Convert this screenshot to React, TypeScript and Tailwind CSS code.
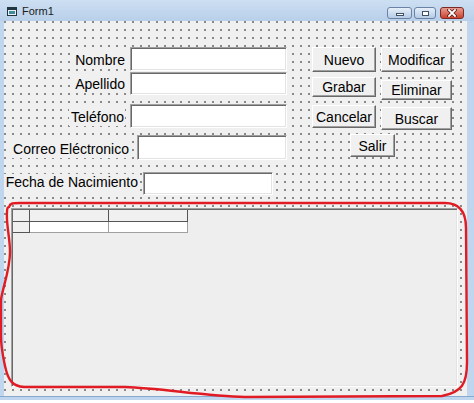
import type { ReactNode } from "react";

const TextBox = ({ className }: { className: string }) => (
  <div
    className={`border border-t-[#a0a0a0] border-l-[#a0a0a0] border-r-white border-b-white bg-white shadow-[inset_1px_1px_0_#696969,inset_-1px_-1px_0_#e3e3e3] ${className}`}
  />
);

const Btn = ({ className, children }: { className: string; children: ReactNode }) => (
  <div
    className={`flex items-center justify-center border border-t-white border-l-white border-r-[#696969] border-b-[#696969] bg-[#f0f0f0] text-[14px] leading-none shadow-[inset_-1px_-1px_0_#a0a0a0] ${className}`}
  >
    {children}
  </div>
);

const Label = ({ className, children }: { className: string; children: ReactNode }) => (
  <div className={`flex shrink-0 justify-end ${className}`}>
    <span className="whitespace-nowrap bg-[#f0f0f0] pl-[2px] pr-[1px] text-[14px] leading-[17px]">{children}</span>
  </div>
);

const TitleBar = () => (
  <div className="flex h-[21px] items-center bg-linear-to-b from-[#cddff2] to-[#b8cfea]">
    {/* form icon */}
    <svg className="ml-[7px] mt-[1px]" width="10" height="9" viewBox="0 0 10 9">
      <rect x="0.5" y="0.5" width="9" height="8" fill="#e8f2f6" stroke="#22343f" />
      <rect x="0.5" y="0.5" width="9" height="2.5" fill="#22343f" />
      <rect x="2" y="4" width="6" height="3" fill="#3f8a9c" />
    </svg>
    <span className="ml-[5px] mt-[1px] text-[11px] leading-none text-[#1b1b1b]">Form1</span>

    <div className="ml-auto mr-[10px] mt-[7px] flex self-start">
      <div className="flex h-[12px] w-[25px] items-end justify-center rounded-[3px] border border-[#6a83a4] bg-linear-to-b from-[#e6eff9] to-[#b6cbe6] pb-[2px]">
        <div className="h-[3px] w-[8px] border border-[#3d5068] bg-white" />
      </div>
      <div className="ml-[2px] flex h-[12px] w-[22px] items-center justify-center rounded-[3px] border border-[#6a83a4] bg-linear-to-b from-[#e6eff9] to-[#b6cbe6]">
        <div className="h-[5px] w-[7px] border-[1.5px] border-[#3d5068] bg-white" />
      </div>
      <div className="ml-[4px] flex h-[12px] w-[24px] items-center justify-center rounded-[3px] border border-[#7d2a22] bg-linear-to-b from-[#e89a8f] to-[#c8402f]">
        <svg width="10" height="8" viewBox="0 0 10 8">
          <path d="M2 1 L8 7 M8 1 L2 7" stroke="#5c1a12" strokeWidth="3.4" strokeLinecap="square" />
          <path d="M2 1 L8 7 M8 1 L2 7" stroke="#ffffff" strokeWidth="1.8" strokeLinecap="square" />
        </svg>
      </div>
    </div>
  </div>
);

const Grid = () => (
  <div className="ml-[7px] mt-[13px] h-[179px] w-[447px] border border-t-[#a0a0a0] border-l-[#a0a0a0] border-r-white border-b-white bg-[#eeeeee] shadow-[inset_1px_1px_0_#696969,inset_-1px_-1px_0_#e3e3e3] p-[1px]">
    <div className="flex">
      <div className="h-[12px] w-[17px] border-r border-b border-[#555555] bg-[#f0f0f0]" />
      <div className="h-[12px] w-[79px] border-r border-b border-[#555555] bg-[#f0f0f0]" />
      <div className="h-[12px] w-[79px] border-r border-b border-[#555555] bg-[#f0f0f0]" />
    </div>
    <div className="flex">
      <div className="h-[11px] w-[17px] border-r border-b border-[#555555] bg-[#f0f0f0]" />
      <div className="h-[11px] w-[79px] border-r border-b border-[#a0a0a0] bg-white" />
      <div className="h-[11px] w-[79px] border-r border-b border-[#a0a0a0] bg-white" />
    </div>
  </div>
);

const RedOutline = () => (
  <svg className="pointer-events-none absolute left-0 top-0" width="474" height="403" viewBox="0 0 474 403">
    <path
      d="M 9 207 C 10 203 13 203 20 203 L 445 203 C 458 203 466 210 466 228 L 467 362 C 467 384 462 392 442 396 L 245 397 C 205 396 160 388 125 387 L 24 387 C 12 386 8 380 5 366 C 3 356 1 348 1 336 L 1 300 C 2 290 10 270 10 252 C 10 238 6 224 7 212 C 7 208 8 207 9 207"
      fill="none"
      stroke="#e11b24"
      strokeWidth="2.4"
      strokeLinecap="round"
      strokeLinejoin="round"
    />
  </svg>
);

export default function App() {
  return (
    <div className="relative h-[403px] w-[474px] overflow-hidden bg-white font-['Liberation_Sans',Arial,sans-serif] text-black">
      <div className="flex h-[400px] w-[474px] flex-col bg-[#c0d6ee]">
        <TitleBar />

        <div className="flex flex-1 pl-[4px] pr-[7px]">
          {/* Client area with the design-time dot grid */}
          <div className="flex flex-1 flex-col bg-[#f0f0f0] bg-[radial-gradient(circle_at_1px_1px,#8a8a8a_0.75px,transparent_1px)] bg-[size:8px_8px] pt-[26px]">
            <div className="flex items-start">
              {/* Labels + text boxes */}
              <div className="flex w-[283px] flex-col">
                <div className="flex h-[24px] items-center">
                  <Label className="mt-[3px] w-[122px]">Nombre</Label>
                  <TextBox className="ml-[4px] h-[24px] w-[157px]" />
                </div>
                <div className="mt-[1px] flex h-[23px] items-center">
                  <Label className="mt-[2px] w-[122px]">Apellido</Label>
                  <TextBox className="ml-[4px] h-[23px] w-[157px]" />
                </div>
                <div className="mt-[9px] flex h-[24px] items-center">
                  <Label className="mt-[3px] w-[121px]">Teléfono</Label>
                  <TextBox className="ml-[5px] h-[24px] w-[157px]" />
                </div>
                <div className="mt-[7px] flex h-[25px] items-center">
                  <Label className="mt-[3px] w-[126px]">Correo Eléctronico</Label>
                  <TextBox className="ml-[7px] h-[25px] w-[150px]" />
                </div>
                <div className="mt-[12px] flex h-[23px] items-center">
                  <Label className="-mt-[3px] w-[135px]">Fecha de Nacimiento</Label>
                  <TextBox className="ml-[4px] h-[23px] w-[130px]" />
                </div>
              </div>

              {/* Command buttons */}
              <div className="ml-[25px] flex flex-col">
                <div className="flex h-[25px] gap-[5px]">
                  <Btn className="h-[25px] w-[64px]">Nuevo</Btn>
                  <Btn className="h-[25px] w-[71px]">Modificar</Btn>
                </div>
                <div className="flex h-[28px] items-start gap-[5px]">
                  <Btn className="mt-[5px] h-[20px] w-[64px]">Grabar</Btn>
                  <Btn className="mt-[8px] h-[20px] w-[71px]">Eliminar</Btn>
                </div>
                <div className="flex h-[30px] items-start gap-[5px]">
                  <Btn className="mt-[5px] h-[23px] w-[64px]">Cancelar</Btn>
                  <Btn className="mt-[7px] h-[23px] w-[71px]">Buscar</Btn>
                </div>
                <div className="flex">
                  <Btn className="ml-[38px] mt-[4px] h-[23px] w-[45px]">Salir</Btn>
                </div>
              </div>
            </div>

            <Grid />
          </div>
        </div>

        <div className="h-[4px] border-t border-[#86a9cf]" />
      </div>
      <RedOutline />
    </div>
  );
}
